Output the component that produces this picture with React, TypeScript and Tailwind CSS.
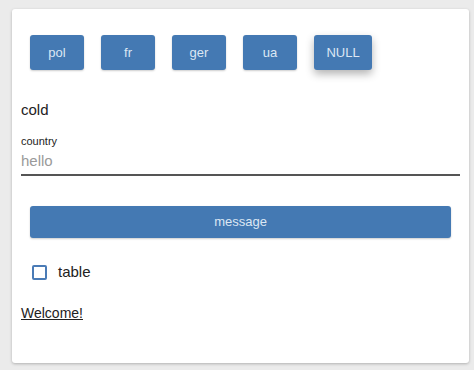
export default function App() {
  const langs = ['pol', 'fr', 'ger', 'ua']

  return (
    <div className="min-h-[370px] w-[474px] bg-[#ebebeb] pt-[9px] pl-[12px] font-['Liberation_Sans',Arial,sans-serif]">
      <div className="w-[457px] h-[354px] bg-white rounded-[3px] shadow-[0_1px_3px_rgba(0,0,0,0.25)] px-[9px] pt-[26px]">
        <div className="flex gap-[17px] pl-[9px]">
          {langs.map((l) => (
            <button
              key={l}
              className="w-[54px] h-[35px] rounded-[3px] bg-[#4479b3] text-[#dce7f3] text-[13px] shadow-[0_1px_2px_rgba(0,0,0,0.2)]"
            >
              {l}
            </button>
          ))}
          <button className="w-[58px] h-[35px] rounded-[3px] bg-[#4479b3] text-[#dce7f3] text-[13px] shadow-[0_4px_8px_rgba(0,0,0,0.3)]">
            NULL
          </button>
        </div>

        <div className="mt-[31px] text-[15px] leading-[18px] text-[#222]">cold</div>

        <div className="mt-[16px]">
          <div className="text-[11px] leading-[13px] text-[#222]">country</div>
          <div className="mt-[4px] pb-[4px] text-[15px] leading-[18px] text-[#9a9a9a] border-b-2 border-[#555]">
            hello
          </div>
        </div>

        <button className="mt-[30px] ml-[9px] w-[421px] h-[32px] rounded-[3px] bg-[#4479b3] text-[#dce7f3] text-[13px] shadow-[0_1px_2px_rgba(0,0,0,0.2)]">
          message
        </button>

        <label className="mt-[25px] ml-[11px] flex items-center gap-[11px]">
          <span className="w-[15px] h-[15px] rounded-[2px] border-2 border-[#4a7bb6] bg-white" />
          <span className="text-[15px] leading-[18px] text-[#222]">table</span>
        </label>

        <div className="mt-[20px]">
          <a className="text-[14px] leading-[17px] text-[#222] underline">Welcome!</a>
        </div>
      </div>
    </div>
  )
}
